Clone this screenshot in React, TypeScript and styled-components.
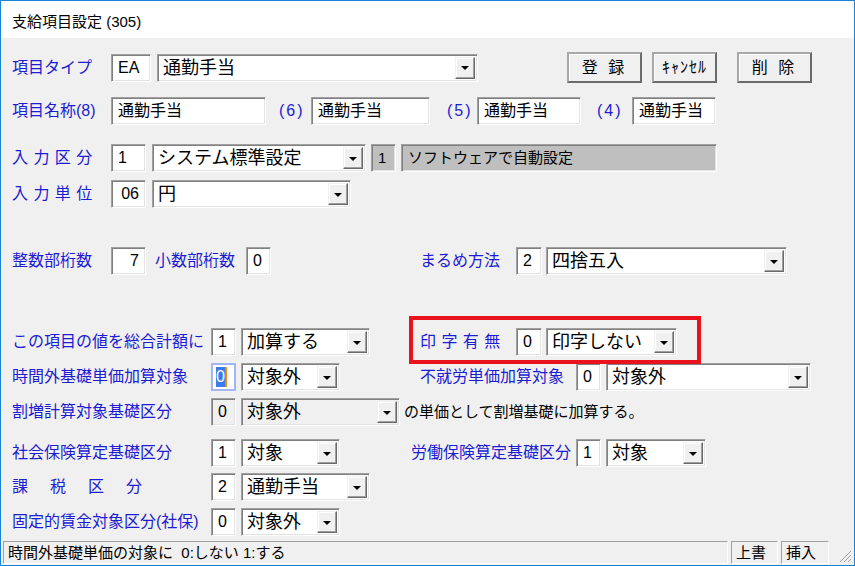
import React from 'react';
import styled, { createGlobalStyle, css } from 'styled-components';

const Global = createGlobalStyle`
  html, body { margin: 0; padding: 0; }
  body {
    width: 855px; height: 566px; overflow: hidden; background: #fff;
    font-family: "Liberation Sans", "Noto Sans CJK JP", sans-serif;
  }
  * { box-sizing: border-box; }
`;

const BLUE = '#1c1cd4';

const Window = styled.div`
  width: 855px;
  height: 566px;
  border: 1px solid #1883d7;
  display: flex;
  flex-direction: column;
  background: #f0f0f0;
`;

const TitleBar = styled.div`
  height: 37px;
  flex: none;
  background: #fff;
  display: flex;
  align-items: center;
  padding: 2px 0 0 11px;
  font-size: 15px;
  color: #000;
`;

const Body = styled.div`
  position: relative;
  flex: 1;
  display: flex;
  flex-direction: column;
  padding: 14px 0 0 11px;
`;

const Row = styled.div<{ $mt: number; $h?: number }>`
  display: flex;
  align-items: center;
  flex: none;
  height: ${p => p.$h ?? 28}px;
  margin-top: ${p => p.$mt}px;
`;

const Label = styled.div<{ $w?: number; $ml?: number; $ls?: number }>`
  flex: none;
  width: ${p => (p.$w ? `${p.$w}px` : 'auto')};
  margin-left: ${p => p.$ml ?? 0}px;
  letter-spacing: ${p => p.$ls ?? 0}px;
  font-size: 16px;
  line-height: 20px;
  color: ${BLUE};
  white-space: nowrap;
`;

const Note = styled.div<{ $ml?: number }>`
  margin-left: ${p => p.$ml ?? 0}px;
  font-size: 15px;
  line-height: 20px;
  color: #000;
  white-space: nowrap;
`;

const sunken = css`
  border: 1px solid;
  border-color: #a0a0a0 #fff #fff #a0a0a0;
  box-shadow: inset 1px 1px 0 #808080, inset -1px -1px 0 #e3e3e3;
`;

const Field = styled.div<{ $w: number; $ml?: number; $align?: 'left' | 'right'; $bg?: string }>`
  ${sunken};
  flex: none;
  width: ${p => p.$w}px;
  height: 28px;
  margin-left: ${p => p.$ml ?? 0}px;
  background: ${p => p.$bg ?? '#fff'};
  display: flex;
  align-items: center;
  justify-content: ${p => (p.$align === 'right' ? 'flex-end' : 'flex-start')};
  padding: 0 6px;
  font-size: 16px;
  line-height: 20px;
  color: #000;
  white-space: nowrap;
  overflow: hidden;
`;

const FocusField = styled.div<{ $w: number }>`
  flex: none;
  width: ${p => p.$w}px;
  height: 28px;
  border: 2px solid #a3b5f2;
  background: #fff;
  display: flex;
  align-items: center;
  padding: 2px 0 2px 3px;
`;

const Selection = styled.span`
  height: 20px;
  width: 9px;
  background: #3a7bf0;
  color: #fff;
  font-size: 16px;
  line-height: 20px;
  text-align: center;
`;

const Caret = styled.span`
  height: 20px;
  width: 2px;
  background: #f08c00;
`;

const Combo = styled.div<{ $w: number; $ml?: number; $disabled?: boolean }>`
  ${sunken};
  flex: none;
  width: ${p => p.$w}px;
  height: 28px;
  margin-left: ${p => p.$ml ?? 0}px;
  background: ${p => (p.$disabled ? '#f0f0f0' : '#fff')};
  display: flex;
  align-items: stretch;
  padding: 2px 2px 2px 5px;
`;

const ComboText = styled.div`
  flex: 1;
  display: flex;
  align-items: center;
  font-size: 18px;
  line-height: 22px;
  color: #000;
  white-space: nowrap;
  overflow: hidden;
`;

const ArrowBtn = styled.div`
  flex: none;
  width: 20px;
  background: #f0f0f0;
  border: 1px solid;
  border-color: #f0f0f0 #696969 #696969 #f0f0f0;
  box-shadow: inset -1px -1px 0 #a0a0a0, inset 1px 1px 0 #fff;
  display: flex;
  align-items: center;
  justify-content: center;
  &::after {
    content: '';
    display: block;
    margin-top: 1px;
    border-left: 4px solid transparent;
    border-right: 4px solid transparent;
    border-top: 4px solid #000;
  }
`;

const GrayBox = styled.div<{ $w: number; $ml?: number }>`
  ${sunken};
  flex: none;
  width: ${p => p.$w}px;
  height: 28px;
  margin-left: ${p => p.$ml ?? 0}px;
  background: #bfbfbf;
  display: flex;
  align-items: center;
  padding: 0 6px;
  font-size: 15px;
  line-height: 20px;
  color: #000;
  white-space: nowrap;
`;

const Button = styled.button<{ $w: number; $ml: number; $ls?: number }>`
  flex: none;
  width: ${p => p.$w}px;
  height: 31px;
  margin-left: ${p => p.$ml}px;
  background: #f0f0f0;
  border: 2px solid;
  border-color: #a8a8a8 #6b6b6b #6b6b6b #a8a8a8;
  box-shadow: inset 1px 1px 0 #fff;
  font-family: "Liberation Sans", "Noto Sans CJK JP", sans-serif;
  font-size: 16px;
  line-height: 20px;
  letter-spacing: ${p => p.$ls ?? 0}px;
  color: #000;
  padding: 0;
  white-space: pre;
`;

const RedFrame = styled.div`
  position: absolute;
  left: 408px;
  top: 278px;
  width: 292px;
  height: 48px;
  border: 4px solid #e8131d;
  pointer-events: none;
`;

const StatusBar = styled.div`
  flex: none;
  height: 25px;
  display: flex;
  align-items: stretch;
  gap: 3px;
  padding: 1px 0 1px 2px;
  background: #f0f0f0;
`;

const Panel = styled.div<{ $w?: number }>`
  flex: ${p => (p.$w ? 'none' : '1')};
  width: ${p => (p.$w ? `${p.$w}px` : 'auto')};
  border: 1px solid;
  border-color: #a0a0a0 #fff #fff #a0a0a0;
  display: flex;
  align-items: center;
  padding: 0 4px;
  font-size: 15px;
  line-height: 20px;
  color: #000;
  white-space: nowrap;
`;

const Grip = styled.div`
  flex: none;
  width: 22px;
  display: flex;
  align-items: flex-end;
  justify-content: flex-end;
  padding: 0 2px 1px 0;
`;

const ComboBox: React.FC<{ w: number; ml?: number; text: string; disabled?: boolean }> = ({ w, ml, text, disabled }) => (
  <Combo $w={w} $ml={ml} $disabled={disabled}>
    <ComboText>{text}</ComboText>
    <ArrowBtn />
  </Combo>
);

export default function App() {
  return (
    <>
      <Global />
      <Window>
        <TitleBar>支給項目設定 (305)</TitleBar>
        <Body>
          <Row $mt={0} $h={31}>
            <Label $w={99}>項目タイプ</Label>
            <Field $w={40}>EA</Field>
            <ComboBox w={321} ml={6} text="通勤手当" />
            <Button $w={75} $ml={89} $ls={3}>{'登 録'}</Button>
            <Button $w={65} $ml={10} $ls={1}>ｷｬﾝｾﾙ</Button>
            <Button $w={75} $ml={20} $ls={3}>{'削 除'}</Button>
          </Row>

          <Row $mt={14}>
            <Label $w={99}>項目名称(8)</Label>
            <Field $w={155}>通勤手当</Field>
            <Label $w={32} $ml={13} $ls={2}>(6)</Label>
            <Field $w={119}>通勤手当</Field>
            <Label $w={30} $ml={17} $ls={2}>(5)</Label>
            <Field $w={104}>通勤手当</Field>
            <Label $w={35} $ml={16} $ls={2}>(4)</Label>
            <Field $w={84}>通勤手当</Field>
          </Row>

          <Row $mt={19}>
            <Label $w={99} $ls={5.4}>入力区分</Label>
            <Field $w={35}>1</Field>
            <ComboBox w={214} ml={6} text="システム標準設定" />
            <GrayBox $w={25} $ml={5}>1</GrayBox>
            <GrayBox $w={316} $ml={5}>ソフトウェアで自動設定</GrayBox>
          </Row>

          <Row $mt={8}>
            <Label $w={99} $ls={5.4}>入力単位</Label>
            <Field $w={35} $align="right">06</Field>
            <ComboBox w={199} ml={6} text="円" />
          </Row>

          <Row $mt={39}>
            <Label $w={99}>整数部桁数</Label>
            <Field $w={35} $align="right">7</Field>
            <Label $w={91} $ml={9}>小数部桁数</Label>
            <Field $w={25}>0</Field>
            <Label $w={96} $ml={149}>まるめ方法</Label>
            <Field $w={26}>2</Field>
            <ComboBox w={241} ml={4} text="四捨五入" />
          </Row>

          <Row $mt={53}>
            <Label $w={199}>この項目の値を総合計額に</Label>
            <Field $w={25}>1</Field>
            <ComboBox w={129} ml={5} text="加算する" />
            <Label $w={96} $ml={50} $ls={5.4}>印字有無</Label>
            <Field $w={26}>0</Field>
            <ComboBox w={131} ml={4} text="印字しない" />
          </Row>

          <Row $mt={7}>
            <Label $w={199}>時間外基礎単価加算対象</Label>
            <FocusField $w={25}>
              <Selection>0</Selection>
              <Caret />
            </FocusField>
            <ComboBox w={99} ml={5} text="対象外" />
            <Label $w={156} $ml={80}>不就労単価加算対象</Label>
            <Field $w={25}>0</Field>
            <ComboBox w={205} ml={5} text="対象外" />
          </Row>

          <Row $mt={7}>
            <Label $w={199}>割増計算対象基礎区分</Label>
            <Field $w={25} $bg="#f0f0f0">0</Field>
            <ComboBox w={159} ml={5} text="対象外" disabled />
            <Note $ml={4}>の単価として割増基礎に加算する。</Note>
          </Row>

          <Row $mt={13}>
            <Label $w={199}>社会保険算定基礎区分</Label>
            <Field $w={25}>1</Field>
            <ComboBox w={99} ml={5} text="対象" />
            <Label $w={165} $ml={71}>労働保険算定基礎区分</Label>
            <Field $w={25}>1</Field>
            <ComboBox w={100} ml={5} text="対象" />
          </Row>

          <Row $mt={6}>
            <Label $w={199} $ls={22}>課税区分</Label>
            <Field $w={25}>2</Field>
            <ComboBox w={129} ml={5} text="通勤手当" />
          </Row>

          <Row $mt={7}>
            <Label $w={199}>固定的賃金対象区分(社保)</Label>
            <Field $w={25}>0</Field>
            <ComboBox w={99} ml={5} text="対象外" />
          </Row>

          <RedFrame />
        </Body>
        <StatusBar>
          <Panel>時間外基礎単価の対象に&nbsp;&nbsp;0:しない 1:する</Panel>
          <Panel $w={47}>上書</Panel>
          <Panel $w={48}>挿入</Panel>
          <Grip>
            <svg width="14" height="14" viewBox="0 0 14 14">
              <g stroke="#a0a0a0" strokeWidth="1">
                <line x1="13" y1="2" x2="2" y2="13" />
                <line x1="13" y1="6" x2="6" y2="13" />
                <line x1="13" y1="10" x2="10" y2="13" />
              </g>
            </svg>
          </Grip>
        </StatusBar>
      </Window>
    </>
  );
}
